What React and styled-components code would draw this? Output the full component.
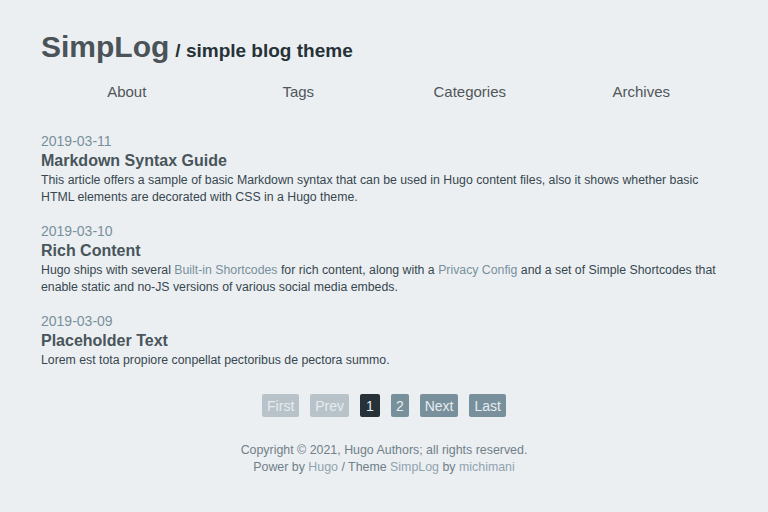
import styled, { createGlobalStyle } from 'styled-components'

const GlobalStyle = createGlobalStyle`
  html, body {
    margin: 0;
    padding: 0;
    background: #eceff2;
  }
  body {
    font-family: "Liberation Sans", Arial, sans-serif;
    color: #37474f;
  }
  a {
    text-decoration: none;
  }
`

const posts = [
  {
    date: '2019-03-11',
    title: 'Markdown Syntax Guide',
    summary: [
      'This article offers a sample of basic Markdown syntax that can be used in Hugo content files, also it shows whether basic HTML elements are decorated with CSS in a Hugo theme.',
    ],
  },
  {
    date: '2019-03-10',
    title: 'Rich Content',
    summary: [
      'Hugo ships with several ',
      { link: 'Built-in Shortcodes' },
      ' for rich content, along with a ',
      { link: 'Privacy Config' },
      ' and a set of Simple Shortcodes that enable static and no-JS versions of various social media embeds.',
    ],
  },
  {
    date: '2019-03-09',
    title: 'Placeholder Text',
    summary: ['Lorem est tota propiore conpellat pectoribus de pectora summo.'],
  },
]

const pages = [
  { label: 'First', kind: 'disabled' },
  { label: 'Prev', kind: 'disabled' },
  { label: '1', kind: 'current' },
  { label: '2', kind: 'normal' },
  { label: 'Next', kind: 'normal' },
  { label: 'Last', kind: 'normal' },
]

const App = () => {
  return (
    <>
      <GlobalStyle />
      <Page>
        <Header>
          <SiteTitle href='/#'>SimpLog</SiteTitle>
          <SiteSub>/ simple blog theme</SiteSub>
        </Header>
        <Nav>
          {['About', 'Tags', 'Categories', 'Archives'].map((item) => (
            <NavItem key={item} href='/#'>
              {item}
            </NavItem>
          ))}
        </Nav>

        <Main>
          {posts.map((post) => (
            <Post key={post.date}>
              <PostDate>{post.date}</PostDate>
              <PostTitle href='/#'>{post.title}</PostTitle>
              <Summary>
                {post.summary.map((part, i) =>
                  typeof part === 'string' ? (
                    part
                  ) : (
                    <InlineLink key={i} href='/#'>
                      {part.link}
                    </InlineLink>
                  )
                )}
              </Summary>
            </Post>
          ))}
        </Main>

        <Pagination>
          {pages.map((p) => (
            <PageButton key={p.label} $kind={p.kind}>
              {p.label}
            </PageButton>
          ))}
        </Pagination>

        <Footer>
          <div>Copyright © 2021, Hugo Authors; all rights reserved.</div>
          <div>
            Power by <FooterLink href='/#'>Hugo</FooterLink> / Theme{' '}
            <FooterLink href='/#'>SimpLog</FooterLink> by{' '}
            <FooterLink href='/#'>michimani</FooterLink>
          </div>
        </Footer>
      </Page>
    </>
  )
}

const Page = styled.div`
  padding: 30px 41px 30px;
`

const Header = styled.header`
  display: flex;
  align-items: baseline;
  gap: 6px;
`

const SiteTitle = styled.a`
  font-size: 30px;
  font-weight: 700;
  color: #4a5358;
`

const SiteSub = styled.span`
  font-size: 19px;
  font-weight: 700;
  color: #263238;
`

const Nav = styled.nav`
  display: grid;
  grid-template-columns: repeat(4, 1fr);
  margin-top: 18px;
`

const NavItem = styled.a`
  text-align: center;
  font-size: 15px;
  color: #505659;
  line-height: 20px;
`

const Main = styled.main`
  margin-top: 30px;
  display: flex;
  flex-direction: column;
  gap: 16px;
`

const Post = styled.article`
  display: flex;
  flex-direction: column;
`

const PostDate = styled.div`
  font-size: 14px;
  color: #78909c;
  line-height: 18px;
`

const PostTitle = styled.a`
  font-size: 16px;
  font-weight: 700;
  color: #48555b;
  line-height: 22px;
`

const Summary = styled.p`
  margin: 0;
  font-size: 12.3px;
  line-height: 17px;
  color: #37474f;
`

const InlineLink = styled.a`
  color: #78909c;
`

const Pagination = styled.nav`
  display: flex;
  justify-content: center;
  gap: 11px;
  margin-top: 25px;
`

const PageButton = styled.span`
  display: inline-flex;
  align-items: center;
  padding: 0 ${({ $kind }) => ($kind === 'current' ? '6px' : '5px')};
  height: 23px;
  border-radius: 2px;
  font-size: 14px;
  color: #e6ecef;
  background: ${({ $kind }) =>
    $kind === 'current' ? '#263238' : $kind === 'disabled' ? '#b7c3c9' : '#78909c'};
`

const Footer = styled.footer`
  margin-top: 25px;
  text-align: center;
  font-size: 12.4px;
  line-height: 17px;
  color: #6f8089;
`

const FooterLink = styled.a`
  color: #8fa4ae;
`

export default App
